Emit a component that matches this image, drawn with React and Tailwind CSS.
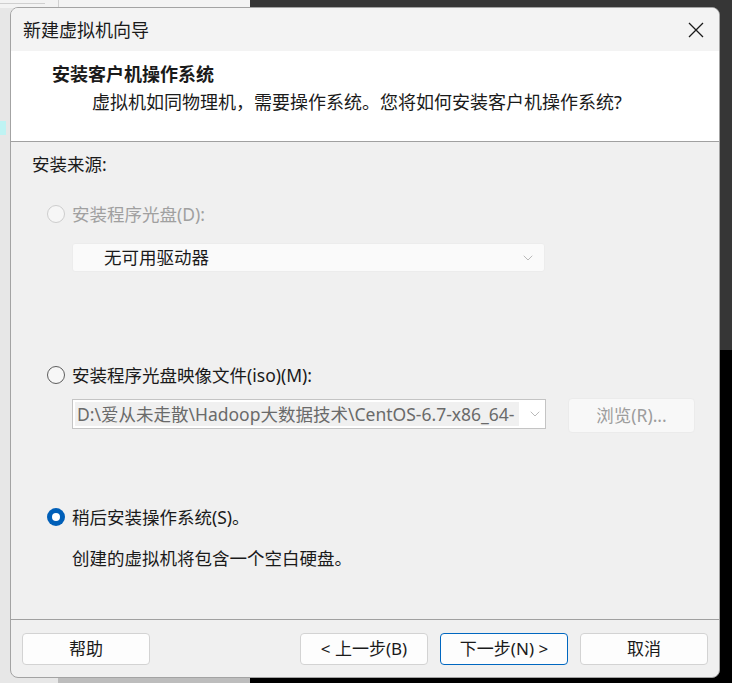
import { ChevronDown } from 'lucide-react'

const fontStack = "font-['Noto_Sans','Noto_Sans_CJK_SC',sans-serif]"

function Radio({ state = 'off', disabled = false }) {
  if (state === 'on') {
    return (
      <span className="flex h-[18px] w-[18px] shrink-0 items-center justify-center rounded-full bg-[#005fb8]">
        <span className="h-[8px] w-[8px] rounded-full bg-white" />
      </span>
    )
  }
  return (
    <span
      className={
        disabled
          ? 'h-[18px] w-[18px] shrink-0 rounded-full border border-[#cdcdcd] bg-[#f6f6f6]'
          : 'h-[18px] w-[18px] shrink-0 rounded-full border border-[#5d5d5d] bg-[#f7f7f7]'
      }
    />
  )
}

function FooterButton({ children, primary = false }) {
  return (
    <button
      type="button"
      className={
        primary
          ? 'flex h-[32px] w-[128px] items-center justify-center rounded-[4px] border border-[#0067c0] bg-[#fdfdfd] text-[17px] text-[#1a1a1a]'
          : 'flex h-[32px] w-[128px] items-center justify-center rounded-[4px] border border-[#d3d3d3] bg-[#fdfdfd] text-[17px] text-[#1a1a1a]'
      }
    >
      {children}
    </button>
  )
}

export default function App() {
  return (
    <div className={`relative h-[683px] w-[732px] overflow-hidden bg-[#e7e7e7] ${fontStack}`}>
      {/* desktop behind the dialog */}
      <div className="absolute left-0 top-0 h-[8px] w-[250px] bg-[#f3f3f3]">
        <div className="mt-[3px] h-px w-[45px] bg-[#cfcfcf]" />
      </div>
      <div className="absolute left-[58px] top-0 h-[8px] w-px bg-[#d0d0d0]" />
      <div className="absolute left-[250px] right-0 top-0 h-[350px] bg-[#363636]" />
      <div className="absolute bottom-0 left-[250px] right-0 top-[350px] bg-black" />
      <div className="absolute bottom-0 left-[58px] h-[8px] w-[192px] bg-[#bdbdbd]" />
      <div className="absolute left-0 top-[121px] h-[14px] w-[6px] bg-[#bff3f3]" />

      {/* dialog */}
      <div className="absolute left-[10px] top-[7px] flex h-[671px] w-[710px] flex-col overflow-hidden rounded-[8px] border border-[#a3a3a3] bg-[#f0f0f0] text-[#1a1a1a]">
        <div className="flex h-[43px] shrink-0 items-center justify-between bg-[#f3f3f3] pl-[12px] pr-[15px]">
          <span className="text-[18px] leading-none">新建虚拟机向导</span>
          <svg width="16" height="16" viewBox="0 0 16 16" className="mt-[1px]">
            <path d="M1 1 L15 15 M15 1 L1 15" stroke="#1a1a1a" strokeWidth="1.3" fill="none" />
          </svg>
        </div>

        <div className="flex h-[90px] shrink-0 flex-col bg-white">
          <div className="mt-[11px] h-[24px] pl-[41px] text-[18px] font-bold leading-[24px]">安装客户机操作系统</div>
          <div className="mt-[4px] h-[24px] pl-[81px] text-[18px] leading-[24px]">
            虚拟机如同物理机，需要操作系统。您将如何安装客户机操作系统?
          </div>
        </div>
        <div className="h-px shrink-0 bg-[#a0a0a0]" />

        <div className="flex flex-1 flex-col text-[17.5px]">
          <div className="mt-[10px] h-[24px] pl-[21px] leading-[24px]">安装来源:</div>

          <div className="mt-[26px] flex h-[24px] items-center pl-[36px]">
            <Radio disabled />
            <span className="ml-[7px] text-[#a0a0a0]">安装程序光盘(D):</span>
          </div>
          <div className="ml-[61px] mt-[17px] flex h-[29px] w-[473px] items-center justify-between rounded-[3px] border border-[#ececec] bg-[#fafafa] pl-[31px] pr-[8px]">
            <span>无可用驱动器</span>
            <ChevronDown className="h-[16px] w-[16px] text-[#a8a8a8]" strokeWidth={1.2} />
          </div>

          <div className="mt-[91px] flex h-[24px] items-center pl-[36px]">
            <Radio />
            <span className="ml-[7px]">安装程序光盘映像文件(iso)(M):</span>
          </div>
          <div className="ml-[61px] mt-[11px] flex h-[35px] items-start">
            <div className="mt-[1px] flex h-[30px] w-[474px] items-center border border-[#c4c4c4] bg-white p-[2px]">
              <span className="flex h-full w-[444px] items-center whitespace-nowrap bg-[#f0f0f0] pl-[2px] text-[#6a6a6a]">
                D:\爱从未走散\Hadoop大数据技术\CentOS-6.7-x86_64-
              </span>
              <ChevronDown className="ml-[8px] h-[16px] w-[16px] text-[#a8a8a8]" strokeWidth={1.2} />
            </div>
            <div className="ml-[22px] flex h-[35px] w-[127px] items-center justify-center rounded-[4px] border border-[#ebebeb] bg-[#f8f8f8] text-[#9d9d9d]">
              浏览(R)...
            </div>
          </div>

          <div className="mt-[72px] flex h-[24px] items-center pl-[36px]">
            <Radio state="on" />
            <span className="ml-[7px]">稍后安装操作系统(S)。</span>
          </div>
          <div className="ml-[61px] mt-[17px] h-[24px] leading-[24px]">创建的虚拟机将包含一个空白硬盘。</div>
        </div>

        <div className="h-px shrink-0 bg-[#a0a0a0]" />
        <div className="flex h-[57px] shrink-0 items-start justify-between px-[11px] pt-[13px]">
          <FooterButton>帮助</FooterButton>
          <div className="flex gap-[12px]">
            <FooterButton>&lt; 上一步(B)</FooterButton>
            <FooterButton primary>下一步(N) &gt;</FooterButton>
            <FooterButton>取消</FooterButton>
          </div>
        </div>
      </div>
    </div>
  )
}
